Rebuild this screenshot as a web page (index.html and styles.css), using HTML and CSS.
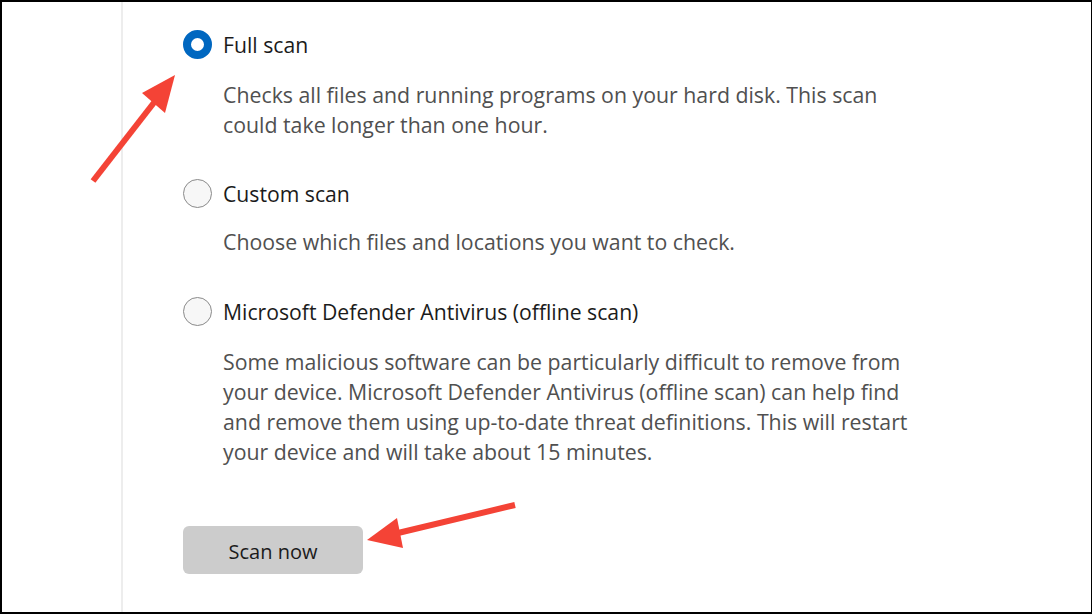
FILE: index.html
```html
<!DOCTYPE html>
<html>
<head>
<meta charset="utf-8">
<link rel="stylesheet" href="styles.css">
</head>
<body>
<div class="frame">
  <div class="rail"></div>
  <div class="content">
    <div class="option opt1">
      <div class="row"><span class="radio checked"></span><span class="label">Full scan</span></div>
      <p class="desc"><span>Checks all files and running programs on your hard disk. This scan</span><span>could take longer than one hour.</span></p>
    </div>
    <div class="option opt2">
      <div class="row"><span class="radio"></span><span class="label">Custom scan</span></div>
      <p class="desc"><span>Choose which files and locations you want to check.</span></p>
    </div>
    <div class="option opt3">
      <div class="row"><span class="radio"></span><span class="label">Microsoft Defender Antivirus (offline scan)</span></div>
      <p class="desc"><span>Some malicious software can be particularly difficult to remove from</span><span>your device. Microsoft Defender Antivirus (offline scan) can help find</span><span>and remove them using up-to-date threat definitions. This will restart</span><span>your device and will take about 15 minutes.</span></p>
    </div>
    <button class="scan-btn">Scan now</button>
  </div>
</div>
<svg class="annot" width="1092" height="614" viewBox="0 0 1092 614">
  <line x1="93" y1="181" x2="156" y2="100" stroke="#f44336" stroke-width="6"/>
  <polygon points="175,75 142,93 165,113" fill="#f44336"/>
  <line x1="515" y1="505" x2="398" y2="533" stroke="#f44336" stroke-width="6"/>
  <polygon points="367,540 397,518 403,548" fill="#f44336"/>
</svg>
</body>
</html>
```
FILE: styles.css
```css
html, body {
  margin: 0;
  padding: 0;
}
body {
  position: relative;
  width: 1092px;
  height: 614px;
  overflow: hidden;
  background: #fff;
  font-family: "Open Sans", "Noto Sans", sans-serif;
}
.frame {
  box-sizing: border-box;
  width: 1092px;
  height: 614px;
  border-top: 2px solid #000;
  border-left: 2px solid #000;
  border-right: 1px solid #000;
  border-bottom: 2px solid #000;
  display: flex;
  background: #fff;
}
.rail {
  width: 119px;
  flex: none;
  border-right: 2px solid #ededed;
}
.content {
  padding: 27px 0 0 60px;
  display: flex;
  flex-direction: column;
  align-items: flex-start;
}
.row {
  display: flex;
  align-items: center;
  height: 30px;
}
.radio {
  box-sizing: border-box;
  width: 29px;
  height: 29px;
  border-radius: 50%;
  border: 1.5px solid #8a8a8a;
  background: #f7f7f7;
  flex: none;
}
.radio.checked {
  border: 8px solid #0067c0;
  background: #fff;
}
.label {
  margin-left: 11px;
  font-size: 21.2px;
  color: #1b1b1b;
}
.desc {
  margin: 21px 0 0 40px;
  font-size: 21.3px;
  line-height: 30px;
  color: #505050;
}
.desc span {
  display: block;
  white-space: nowrap;
}
.opt2 {
  margin-top: 38px;
}
.opt2 .desc {
  margin-top: 19px;
}
.opt3 {
  margin-top: 39px;
}
.scan-btn {
  margin-top: 59px;
  width: 180px;
  height: 48px;
  border: none;
  border-radius: 6px;
  background: #cccccc;
  color: #1b1b1b;
  font-family: "Open Sans", "Noto Sans", sans-serif;
  font-size: 20px;
  padding: 3px 0 0;
}
.annot {
  position: absolute;
  top: 0;
  left: 0;
  pointer-events: none;
}
```
